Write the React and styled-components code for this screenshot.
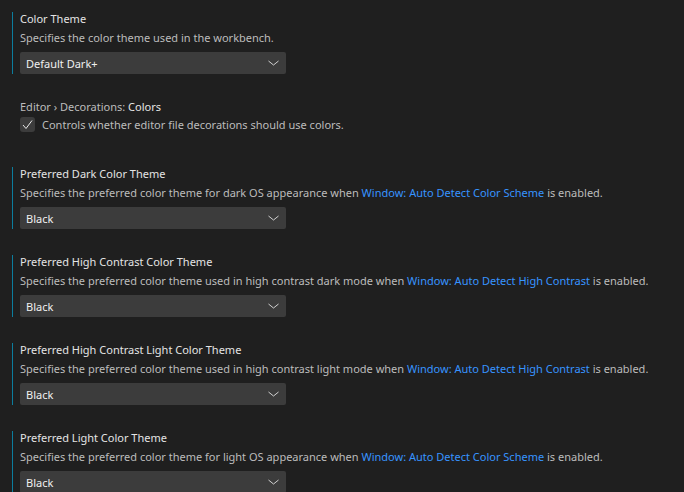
import React from 'react'
import styled, { createGlobalStyle } from 'styled-components'

const GlobalStyle = createGlobalStyle`
	html, body {
		margin: 0;
		padding: 0;
		background: #1f1f1f;
	}
	body {
		font-family: "Noto Sans", "Open Sans", sans-serif;
		font-size: 11px;
	}
`

const Page = styled.div`
	width: 684px;
	height: 492px;
	overflow: hidden;
	background: #1f1f1f;
	padding-top: 12px;
	box-sizing: border-box;
`

const Setting = styled.div`
	margin-left: 12px;
	padding-left: 7px;
	border-left: 1px solid ${({ modified }) => modified ? '#0c7d9d' : 'transparent'};
	margin-bottom: 26px;
	padding-bottom: ${({ compact }) => compact ? '9px' : '0'};
`

const Title = styled.div`
	color: #e4e4e4;
	line-height: 14px;
	height: 14px;
	white-space: nowrap;
`

const Category = styled.span`
	color: #bcbcbc;
`

const Description = styled.div`
	color: #bcbcbc;
	line-height: 16px;
	margin-top: 4px;
	white-space: nowrap;
`

const Link = styled.span`
	color: #3794ff;
`

const Select = styled.div`
	display: flex;
	align-items: center;
	justify-content: space-between;
	width: 266px;
	height: 22px;
	margin-top: 6px;
	padding: 0 7px 0 6px;
	box-sizing: border-box;
	background: #3c3c3c;
	border-radius: 2px;
	color: #f0f0f0;
`

const CheckRow = styled.div`
	display: flex;
	align-items: center;
	gap: 7px;
	margin-top: 3px;
	color: #bcbcbc;
`

const Box = styled.div`
	width: 15px;
	height: 15px;
	border-radius: 3px;
	background: #3c3c3c;
	display: flex;
	align-items: center;
	justify-content: center;
`

const Chevron = () => (
	<svg width="11" height="6" viewBox="0 0 11 6">
		<path d="M0.5 1 L5.5 5 L10.5 1" fill="none" stroke="#d0d0d0" strokeWidth="1" />
	</svg>
)

const Check = () => (
	<svg width="13" height="13" viewBox="0 0 13 13">
		<path d="M2 7 L5 10.5 L11 2.5" fill="none" stroke="#e8e8e8" strokeWidth="1" />
	</svg>
)

const themes = [
	{
		title: 'Preferred Dark Color Theme',
		before: 'Specifies the preferred color theme for dark OS appearance when ',
		link: 'Window: Auto Detect Color Scheme',
	},
	{
		title: 'Preferred High Contrast Color Theme',
		before: 'Specifies the preferred color theme used in high contrast dark mode when ',
		link: 'Window: Auto Detect High Contrast',
	},
	{
		title: 'Preferred High Contrast Light Color Theme',
		before: 'Specifies the preferred color theme used in high contrast light mode when ',
		link: 'Window: Auto Detect High Contrast',
	},
	{
		title: 'Preferred Light Color Theme',
		before: 'Specifies the preferred color theme for light OS appearance when ',
		link: 'Window: Auto Detect Color Scheme',
	},
]

export default function App() {
	return (
		<Page>
			<GlobalStyle />
			<Setting modified>
				<Title>Color Theme</Title>
				<Description>Specifies the color theme used in the workbench.</Description>
				<Select>
					<span>Default Dark+</span>
					<Chevron />
				</Select>
			</Setting>
			<Setting compact>
				<Title><Category>Editor › Decorations: </Category>Colors</Title>
				<CheckRow>
					<Box><Check /></Box>
					<span>Controls whether editor file decorations should use colors.</span>
				</CheckRow>
			</Setting>
			{themes.map(({ title, before, link }) => (
				<Setting modified key={title}>
					<Title>{title}</Title>
					<Description>{before}<Link>{link}</Link> is enabled.</Description>
					<Select>
						<span>Black</span>
						<Chevron />
					</Select>
				</Setting>
			))}
		</Page>
	)
}
